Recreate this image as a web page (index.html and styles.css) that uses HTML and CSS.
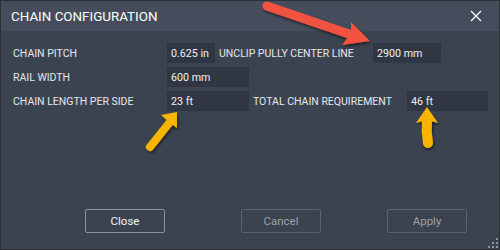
FILE: index.html
```html
<!DOCTYPE html>
<html>
<head>
<meta charset="utf-8">
<link rel="stylesheet" href="styles.css">
</head>
<body>
<div class="window">
  <div class="titlebar">
    <span class="title">CHAIN CONFIGURATION</span>
    <svg class="close-x" width="12" height="12" viewBox="0 0 12 12"><path d="M1 1 L11 11 M11 1 L1 11" stroke="#ffffff" stroke-width="1.3" fill="none"/></svg>
  </div>
  <div class="content">
    <div class="row">
      <span class="label">CHAIN PITCH</span>
      <span class="field w48">0.625 in</span>
      <span class="label second">UNCLIP PULLY CENTER LINE</span>
      <span class="field w68">2900 mm</span>
    </div>
    <div class="row">
      <span class="label">RAIL WIDTH</span>
      <span class="field w82">600 mm</span>
    </div>
    <div class="row">
      <span class="label">CHAIN LENGTH PER SIDE</span>
      <span class="field w82">23 ft</span>
      <span class="label second">TOTAL CHAIN REQUIREMENT</span>
      <span class="field w81">46 ft</span>
    </div>
  </div>
  <div class="footer">
    <button class="btn btn-close">Close</button>
    <button class="btn btn-cancel disabled">Cancel</button>
    <button class="btn btn-apply disabled">Apply</button>
  </div>
  <svg class="grip" width="12" height="12" viewBox="0 0 12 12">
    <g fill="#8a93a3">
      <rect x="9" y="1" width="2" height="2"/>
      <rect x="5" y="5" width="2" height="2"/>
      <rect x="9" y="5" width="2" height="2"/>
      <rect x="1" y="9" width="2" height="2"/>
      <rect x="5" y="9" width="2" height="2"/>
      <rect x="9" y="9" width="2" height="2"/>
    </g>
  </svg>
  <svg class="arrows" width="500" height="250" viewBox="0 0 500 250">
    <defs>
      <filter id="sh" x="-20%" y="-20%" width="140%" height="140%">
        <feDropShadow dx="1" dy="2" stdDeviation="1.5" flood-color="#000" flood-opacity="0.55"/>
      </filter>
    </defs>
    <g filter="url(#sh)">
      <line x1="267" y1="6" x2="349" y2="34" stroke="#f2533f" stroke-width="9" stroke-linecap="round"/>
      <path d="M370 41 L351 22 L351 33 L342 45 Z" fill="#f2533f"/>
    </g>
    <g filter="url(#sh)">
      <line x1="150" y1="147" x2="170" y2="122" stroke="#f7b500" stroke-width="8" stroke-linecap="round"/>
      <path d="M177 112 L161 115 L169 122 L177 128 Z" fill="#f7b500"/>
    </g>
    <g filter="url(#sh)">
      <path d="M427 120 Q426 132 428 143" stroke="#f7b500" stroke-width="10" stroke-linecap="round" fill="none"/>
      <path d="M427 107 L416 123 L427 120 L438 123 Z" fill="#f7b500"/>
    </g>
  </svg>
</div>
</body>
</html>
```

FILE: styles.css
```css
html, body {
  margin: 0;
  padding: 0;
  background: #3c4350;
}
.window {
  position: relative;
  width: 500px;
  height: 250px;
  box-sizing: border-box;
  border: 1px solid #2b3039;
  background: #3c4350;
  display: flex;
  flex-direction: column;
  font-family: Roboto, "Liberation Sans", sans-serif;
  overflow: hidden;
}
.titlebar {
  height: 30px;
  background: #454d5c;
  display: flex;
  align-items: center;
  justify-content: space-between;
  padding: 0 17px 0 10px;
  flex: none;
}
.title {
  color: #ffffff;
  font-size: 13.4px;
  letter-spacing: 0;
}
.close-x {
  display: block;
}
.content {
  padding: 12px 0 0 12px;
  display: flex;
  flex-direction: column;
  gap: 4px;
}
.row {
  display: flex;
  align-items: center;
  height: 20px;
}
.label {
  width: 154px;
  color: #e4e7ec;
  font-size: 10.5px;
  flex: none;
}
.label.second {
  margin-left: 4px;
}
.field {
  height: 20px;
  box-sizing: border-box;
  background: #313742;
  color: #eef0f3;
  font-size: 10.7px;
  padding: 0 4px;
  display: flex;
  align-items: center;
  flex: none;
}
.w48 { width: 48px; }
.w68 { width: 68px; }
.w81 { width: 81px; }
.w82 { width: 82px; }
.footer {
  margin-top: auto;
  display: flex;
  padding: 0 0 16px 84px;
}
.btn {
  width: 80px;
  height: 24px;
  box-sizing: border-box;
  background: transparent;
  border: 1px solid #8a909c;
  border-radius: 2px;
  color: #f2f4f7;
  font-family: Roboto, "Liberation Sans", sans-serif;
  font-size: 11.5px;
  padding: 0;
}
.btn.disabled {
  border-color: #5b6270;
  color: #9aa1ad;
}
.btn-cancel { margin-left: 76px; }
.btn-apply { margin-left: 66px; }
.grip {
  position: absolute;
  right: 0;
  bottom: 0;
}
.arrows {
  position: absolute;
  left: -1px;
  top: -1px;
  pointer-events: none;
}
```
